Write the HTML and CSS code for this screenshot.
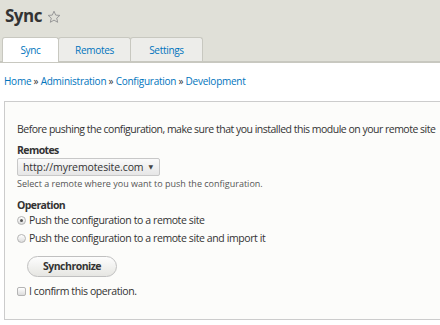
FILE: index.html
```html
<!DOCTYPE html>
<html>
<head>
<meta charset="utf-8">
<link rel="stylesheet" href="styles.css">
</head>
<body>
<div class="header">
  <h1 class="title">Sync <svg class="star" width="14" height="14" viewBox="0 0 14 14"><path d="M7 1.2 L8.7 5.1 L12.9 5.4 L9.7 8.1 L10.7 12.3 L7 10.1 L3.3 12.3 L4.3 8.1 L1.1 5.4 L5.3 5.1 Z" fill="none" stroke="#999" stroke-width="1" stroke-linejoin="round"/></svg></h1>
  <ul class="tabs">
    <li class="tab active">Sync</li>
    <li class="tab">Remotes</li>
    <li class="tab">Settings</li>
  </ul>
</div>
<div class="content">
  <div class="breadcrumb"><a>Home</a> » <a>Administration</a> » <a>Configuration</a> » <a>Development</a></div>
  <div class="fieldset">
    <p class="intro">Before pushing the configuration, make sure that you installed this module on your remote site</p>
    <div class="item">
      <div class="label">Remotes</div>
      <div class="select"><span>http://myremotesite.com</span> <span class="arrow">▼</span></div>
      <div class="desc">Select a remote where you want to push the configuration.</div>
    </div>
    <div class="item op">
      <div class="label">Operation</div>
      <div class="radio"><span class="rb checked"></span>Push the configuration to a remote site</div>
      <div class="radio"><span class="rb"></span>Push the configuration to a remote site and import it</div>
    </div>
    <div class="button">Synchronize</div>
    <div class="check"><span class="cb"></span>I confirm this operation.</div>
  </div>
</div>
</body>
</html>
```
FILE: styles.css
```css
* { box-sizing: border-box; }
html, body { margin: 0; padding: 0; }
body {
  font-family: "Open Sans", "DejaVu Sans", sans-serif;
  font-size: 10.5px;
  letter-spacing: -0.4px;
  color: #333;
  background: #fff;
  width: 440px;
  height: 325px;
  overflow: hidden;
}
.header {
  background: #e0e0d8;
  border-bottom: 2px solid #c8c8c0;
  height: 63px;
  padding: 0 0 0 2px;
  display: flex;
  flex-direction: column;
  justify-content: space-between;
}
.title {
  margin: 0;
  padding: 5px 0 0 3px;
  font-size: 17px;
  font-weight: 700;
  color: #333;
  letter-spacing: -0.5px;
  display: flex;
  align-items: center;
  gap: 5px;
  line-height: 22px;
}
.star { margin-top: 1px; }
.tabs {
  list-style: none;
  margin: 0;
  padding: 0;
  display: flex;
}
.tab {
  width: 73px;
  height: 24px;
  background: #ededea;
  border: 1px solid #c8c8c0;
  border-bottom: none;
  margin-right: -1px;
  color: #0074bd;
  font-size: 10px;
  letter-spacing: -0.3px;
  text-align: center;
  line-height: 24px;
  border-radius: 3px 3px 0 0;
}
.tab.active {
  width: 57px;
  background: #fff;
  height: 25px;
  margin-bottom: -1px;
}
.content { padding: 0 0 0 4px; }
.breadcrumb {
  font-size: 10px;
  letter-spacing: -0.25px;
  color: #333;
  padding: 11px 0 0 0;
  height: 38px;
}
.breadcrumb a { color: #0074bd; }
.fieldset {
  background: #fcfcfa;
  border: 1px solid #ccc;
  border-right: none;
  height: 219px;
  padding: 19px 0 0 12px;
}
.intro { margin: 0 0 6px 0; line-height: 16px; white-space: nowrap; letter-spacing: -0.5px; }
.label { font-weight: 700; line-height: 14px; margin-bottom: 1px; letter-spacing: -0.6px; }
.select {
  width: 143px;
  height: 18px;
  border: 1px solid #c8c8c8;
  border-radius: 2px;
  background: linear-gradient(#fafafa, #e6e6e6);
  font-size: 10.5px;
  letter-spacing: -0.1px;
  line-height: 16px;
  padding-left: 5px;
  display: flex;
  justify-content: space-between;
  color: #333;
}
.arrow { font-size: 6px; padding-right: 6px; line-height: 17px; color: #444; }
.desc { font-size: 9px; letter-spacing: 0; color: #555; margin-top: 2px; line-height: 12px; }
.item { margin-bottom: 8px; }
.op .label { margin-bottom: -1px; }
.radio { display: flex; align-items: center; height: 18px; }
.rb {
  width: 9px; height: 9px; border-radius: 50%;
  border: 1px solid #b4b4b4;
  background: linear-gradient(#fff, #dcdcdc);
  margin-right: 3px;
  position: relative;
  flex: none;
}
.rb.checked::after {
  content: ""; position: absolute; left: 2px; top: 2px;
  width: 3px; height: 3px; border-radius: 50%; background: #555;
}
.op { margin-bottom: 9px; }
.button {
  margin: 0 0 6px 10px;
  width: 90px; height: 21px;
  border: 1px solid #c0c0c0;
  border-radius: 11px;
  background: linear-gradient(#fdfdfd, #e6e6e2);
  font-weight: 700;
  letter-spacing: -0.5px;
  text-align: center;
  line-height: 19px;
  font-size: 10.5px;
}
.check { display: flex; align-items: center; height: 16px; }
.cb {
  width: 9px; height: 9px; border: 1px solid #b4b4b4; border-radius: 2px;
  background: linear-gradient(#fff, #dcdcdc); margin-right: 3px; flex: none;
}
```
